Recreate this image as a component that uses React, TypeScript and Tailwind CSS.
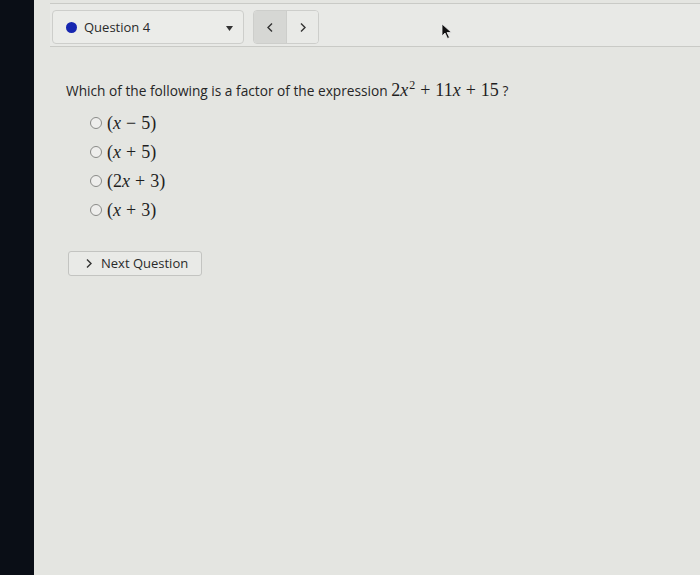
import React from "react";

const options = [
  { a: "", op: "−", b: "5" },
  { a: "", op: "+", b: "5" },
  { a: "2", op: "+", b: "3" },
  { a: "", op: "+", b: "3" },
];

const serif = "font-['Liberation_Serif','DejaVu_Serif',serif]";

const Math2 = ({ children }: { children: React.ReactNode }) => (
  <span className={`${serif} text-[18px] text-[#1f1f1f]`}>{children}</span>
);

const Op = ({ c }: { c: string }) => <span className="mx-[5px]">{c}</span>;

const Chevron = ({ dir }: { dir: "left" | "right" }) => (
  <svg width="8" height="11" viewBox="0 0 8 11" fill="none">
    <path
      d={dir === "left" ? "M6 1.5 L2 5.5 L6 9.5" : "M2 1.5 L6 5.5 L2 9.5"}
      stroke="#333"
      strokeWidth="1.4"
    />
  </svg>
);

export default function App() {
  return (
    <div className="w-[700px] h-[575px] flex overflow-hidden font-['Open_Sans',sans-serif]">
      <div className="w-[34px] bg-[#0a0e16]" />
      <div className="relative flex-1 bg-[#e4e5e1] pl-[16px]">
        {/* top bar */}
        <div className="mt-[3px] h-[44px] border-t border-b border-[#c9cac6] bg-[#e8e9e6] flex items-start pt-[6px] pl-[2px] gap-[9px]">
          <div className="w-[192px] h-[34px] rounded-[4px] border border-[#cdcecb] bg-[#ebece9] flex items-center pl-[13px] pr-[10px]">
            <span className="w-[11px] h-[11px] rounded-full bg-[#1626b0]" />
            <span className="ml-[7px] mt-[1px] text-[13px] text-[#2a2a2a]">Question 4</span>
            <svg className="ml-auto mt-[2px]" width="7" height="5" viewBox="0 0 7 5">
              <path d="M0 0 H7 L3.5 5 Z" fill="#333" />
            </svg>
          </div>
          <div className="h-[34px] flex rounded-[4px] border border-[#cdcecb] overflow-hidden">
            <div className="w-[33px] bg-[#d6d7d4] flex items-center justify-center border-r border-[#cdcecb]">
              <Chevron dir="left" />
            </div>
            <div className="w-[31px] bg-[#e9eae7] flex items-center justify-center">
              <Chevron dir="right" />
            </div>
          </div>
        </div>

        {/* question */}
        <div className="pl-[16px] pt-[33px]">
          <p className="text-[13.7px] text-[#262626] leading-[20px]">
            Which of the following is a factor of the expression{" "}
            <Math2>
              2<i className="mr-[1px]">x</i>
              <sup className="text-[12px] top-[-7px]">2</sup>
              <Op c="+" />
              11<i>x</i>
              <Op c="+" />
              15
            </Math2>{" "}
            ?
          </p>
          <div className="mt-[11px] pl-[24px] flex flex-col gap-[7px]">
            {options.map((o, i) => (
              <label key={i} className="flex items-center h-[22px]">
                <span className="w-[12px] h-[12px] rounded-full border border-[#8a8b88] bg-[#eeeeec]" />
                <span className="ml-[5px]">
                  <Math2>
                    ({o.a}
                    <i>x</i>
                    <Op c={o.op} />
                    {o.b})
                  </Math2>
                </span>
              </label>
            ))}
          </div>
          <button className="mt-[30px] ml-[2px] w-[134px] h-[25px] rounded-[3px] border border-[#c3c4c1] bg-[#e9eae7] flex items-center pl-[16px] text-[13px] text-[#2a2a2a]">
            <Chevron dir="right" />
            <span className="ml-[8px]">Next Question</span>
          </button>
        </div>

        {/* mouse pointer */}
        <svg className="absolute left-[407px] top-[23px]" width="13" height="17" viewBox="0 0 13 17">
          <path d="M1 1 L1 13 L4 10 L6.5 15.5 L8.5 14.5 L6 9.5 L10.5 9.5 Z" fill="#111" stroke="#eee" strokeWidth="0.8" />
        </svg>
      </div>
    </div>
  );
}
